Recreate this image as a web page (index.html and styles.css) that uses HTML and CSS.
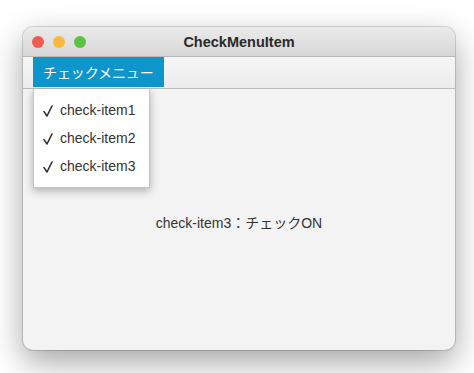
FILE: index.html
```html
<!DOCTYPE html>
<html lang="ja">
<head>
<meta charset="utf-8">
<title>CheckMenuItem</title>
<link rel="stylesheet" href="styles.css">
</head>
<body>
<div class="window">
  <div class="titlebar">
    <div class="lights">
      <span class="light red"></span>
      <span class="light yellow"></span>
      <span class="light green"></span>
    </div>
    <div class="title">CheckMenuItem</div>
  </div>
  <div class="menubar">
    <div class="menu">チェックメニュー</div>
  </div>
  <div class="content">
    <div class="status">check-item3：チェックON</div>
    <ul class="dropdown">
      <li class="item"><svg class="check" viewBox="0 0 10 12" width="10" height="12"><path d="M1 6.6 L4 11 L9 1"/></svg>check-item1</li>
      <li class="item"><svg class="check" viewBox="0 0 10 12" width="10" height="12"><path d="M1 6.6 L4 11 L9 1"/></svg>check-item2</li>
      <li class="item"><svg class="check" viewBox="0 0 10 12" width="10" height="12"><path d="M1 6.6 L4 11 L9 1"/></svg>check-item3</li>
    </ul>
  </div>
</div>
</body>
</html>
```
FILE: styles.css
```css
html, body {
  margin: 0;
  padding: 0;
  background: #ffffff;
}
body {
  box-sizing: border-box;
  min-height: 373px;
  padding: 27px 19px 23px 23px;
  font-family: "Liberation Sans", "Noto Sans CJK JP", sans-serif;
}
.window {
  width: 432px;
  height: 323px;
  border-radius: 10px;
  background: #f3f3f3;
  box-shadow: 0 0 0 1px rgba(0,0,0,0.14), 0 12px 32px rgba(0,0,0,0.36);
  display: flex;
  flex-direction: column;
  overflow: hidden;
}
.titlebar {
  height: 29px;
  background: linear-gradient(#ebebeb, #d7d7d7);
  border-bottom: 1px solid #b9b9b9;
  position: relative;
  display: flex;
  align-items: center;
  justify-content: center;
}
.lights {
  position: absolute;
  left: 9px;
  top: 9px;
  display: flex;
  gap: 9px;
}
.light {
  width: 12px;
  height: 12px;
  border-radius: 50%;
}
.red { background: #f25a52; }
.yellow { background: #f6bb3d; }
.green { background: #5ec244; }
.title {
  font-weight: bold;
  font-size: 14.5px;
  color: #2a2a2a;
}
.menubar {
  height: 31px;
  background: linear-gradient(#f6f6f6, #ececec);
  border-bottom: 1px solid #bcbcbc;
  display: flex;
  padding-left: 10px;
}
.menu {
  background: #0d96cb;
  color: #ffffff;
  font-family: "Noto Sans CJK JP", sans-serif;
  font-size: 14px;
  line-height: 30px;
  height: 30px;
  padding: 0 10px;
  letter-spacing: -0.1px;
}
.content {
  flex: 1;
  position: relative;
  display: flex;
  align-items: center;
  justify-content: center;
}
.status {
  font-family: "Liberation Sans", "Noto Sans CJK JP", sans-serif;
  font-size: 14px;
  color: #333333;
  margin-top: 5px;
}
.dropdown {
  position: absolute;
  left: 10px;
  top: 0;
  width: 115px;
  margin: 0;
  padding: 7px 0;
  list-style: none;
  background: #ffffff;
  border: 1px solid #c4c4c4;
  border-top: none;
  box-shadow: 0 3px 8px rgba(0,0,0,0.28);
}
.item {
  height: 28px;
  padding-left: 9px;
  font-size: 14px;
  color: #333333;
  display: flex;
  align-items: center;
  gap: 7px;
}
.check {
  fill: none;
  stroke: #333333;
  stroke-width: 1.6;
  stroke-linecap: round;
  stroke-linejoin: round;
  margin-top: 1px;
}
```
